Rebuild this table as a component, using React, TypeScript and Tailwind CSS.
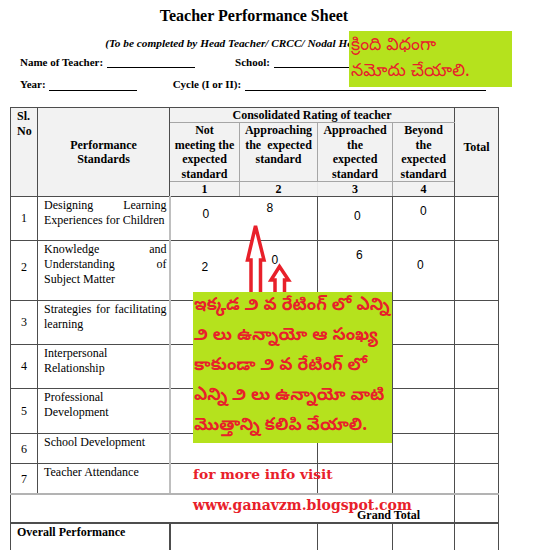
import React from "react";

const B = "border border-[#4d4d4d]";

export default function App() {
  const rows: {
    n: string;
    t: string;
    h: string;
    v: React.ReactNode[];
  }[] = [
    {
      n: "1",
      t: "Designing Learning Experiences for Children",
      h: "h-[44px]",
      v: [
        <span className="inline-block pl-[32px] pt-[10px]">0</span>,
        <span className="inline-block pl-[27px] pt-[4px]">8</span>,
        <span className="inline-block pl-[36px] pt-[12px]">0</span>,
        <span className="inline-block pl-[27px] pt-[7px]">0</span>,
      ],
    },
    {
      n: "2",
      t: "Knowledge and Understanding of Subject Matter",
      h: "h-[60px]",
      v: [
        <span className="inline-block pl-[31px] pt-[19px]">2</span>,
        <span className="inline-block pl-[32px] pt-[12px]">0</span>,
        <span className="inline-block pl-[38px] pt-[7px]">6</span>,
        <span className="inline-block pl-[24px] pt-[17px]">0</span>,
      ],
    },
    { n: "3", t: "Strategies for facilitating learning", h: "h-[44px]", v: [] },
    { n: "4", t: "Interpersonal Relationship", h: "h-[44px]", v: [] },
    { n: "5", t: "Professional Development", h: "h-[45px]", v: [] },
    { n: "6", t: "School Development", h: "h-[30px]", v: [] },
    { n: "7", t: "Teacher Attendance", h: "h-[30px]", v: [] },
  ];

  return (
    <div className="relative w-[533px] h-[550px] overflow-hidden bg-white text-black font-['Liberation_Serif','Times_New_Roman',serif]">
      <div className="ml-[10px] w-[488px]">
        <div className="mt-[7px] h-[18px] leading-[18px] text-center text-[16px] font-bold">
          Teacher Performance Sheet
        </div>
        <div className="mt-[12px] h-[12px] leading-[12px] text-center text-[11.3px] font-bold italic whitespace-nowrap">
          (To be completed by Head Teacher/ CRCC/ Nodal Head Master)
        </div>
        <div className="mt-[6px] h-[14px] flex items-end pl-[10px] text-[11px] font-bold leading-[14px]">
          <span>Name of Teacher:</span>
          <div className="ml-[4px] w-[88px] h-[1px] bg-black mb-[1px]" />
          <span className="ml-[40px]">School:</span>
          <div className="ml-[4px] w-[130px] h-[1px] bg-black mb-[1px]" />
        </div>
        <div className="mt-[8px] h-[14px] flex items-end pl-[10px] text-[11px] font-bold leading-[14px]">
          <span>Year:</span>
          <div className="ml-[3px] w-[88px] h-[1px] bg-black mb-[0px]" />
          <span className="ml-[36px]">Cycle (I or II):</span>
          <div className="ml-[4px] w-[241px] h-[1px] bg-black mb-[0px]" />
        </div>

        <table className="mt-[16px] w-[488px] table-fixed border-collapse text-[12px]">
          <colgroup>
            <col className="w-[27px]" />
            <col className="w-[132px]" />
            <col className="w-[70px]" />
            <col className="w-[78px]" />
            <col className="w-[75px]" />
            <col className="w-[62px]" />
            <col className="w-[44px]" />
          </colgroup>
          <thead className="font-bold leading-[14.5px]">
            <tr className="h-[15px] bg-[#f2f2f2]">
              <td rowSpan={3} className={`${B} align-top pl-[6px] pt-[1px] leading-[15px]`}>
                Sl.
                <br />
                No
              </td>
              <td rowSpan={3} className={`${B} text-center align-middle leading-[14px]`}>
                Performance
                <br />
                Standards
              </td>
              <td colSpan={4} className={`${B} border-b-[#a6a6a6] text-center leading-[13px]`}>
                Consolidated Rating of teacher
              </td>
              <td rowSpan={3} className={`${B} text-center align-middle pb-[10px]`}>
                Total
              </td>
            </tr>
            <tr className="h-[59px] bg-[#f2f2f2]">
              <td className="border border-[#a6a6a6] text-center align-top">
                Not
                <br />
                meeting the
                <br />
                expected
                <br />
                standard
              </td>
              <td className="border border-[#a6a6a6] text-center align-top">
                Approaching
                <br />
                the&nbsp; expected
                <br />
                standard
              </td>
              <td className="border border-[#a6a6a6] text-center align-top">
                Approached
                <br />
                the
                <br />
                expected
                <br />
                standard
              </td>
              <td className="border border-[#a6a6a6] text-center align-top">
                Beyond
                <br />
                the
                <br />
                expected
                <br />
                standard
              </td>
            </tr>
            <tr className="h-[15px] bg-[#f2f2f2]">
              <td className="border border-[#a6a6a6] border-b-[#4d4d4d] text-center leading-[13px]">1</td>
              <td className="border border-[#e6e6e6] border-b-[#4d4d4d] text-center leading-[13px]">2</td>
              <td className="border border-[#a6a6a6] border-b-[#4d4d4d] text-center leading-[13px]">3</td>
              <td className="border border-[#a6a6a6] border-b-[#4d4d4d] text-center leading-[13px]">4</td>
            </tr>
          </thead>
          <tbody className="leading-[15px]">
            {rows.map((r, i) => (
              <tr key={r.n} className={r.h}>
                <td
                  className={`${B} text-center align-middle ${
                    i === 1 ? "pb-[6px]" : i >= 5 ? "pt-[2px]" : ""
                  } ${i === 6 ? "border-b-2 border-b-[#b3b3b3]" : ""}`}
                >
                  {r.n}
                </td>
                <td
                  className={`${B} border-r-2 border-r-[#bfbfbf] align-top pl-[6px] pr-[2px] pt-[1px] text-justify ${
                    i === 6 ? "border-b-2 border-b-[#b3b3b3]" : ""
                  }`}
                >
                  {r.t}
                </td>
                <td
                  className={`border-y border-[#4d4d4d] align-top p-0 font-['Liberation_Sans',Arial,sans-serif] ${
                    i === 6 ? "border-b-2 border-b-[#b3b3b3]" : ""
                  }`}
                >
                  {r.v[0]}
                </td>
                <td
                  className={`border-y border-[#4d4d4d] align-top p-0 font-['Liberation_Sans',Arial,sans-serif] ${
                    i === 6 ? "border-b-2 border-b-[#b3b3b3]" : ""
                  }`}
                >
                  {r.v[1]}
                </td>
                <td
                  className={`${B} align-top p-0 font-['Liberation_Sans',Arial,sans-serif] ${
                    i === 6 ? "border-b-2 border-b-[#b3b3b3]" : ""
                  }`}
                >
                  {r.v[2]}
                </td>
                <td
                  className={`${B} align-top p-0 font-['Liberation_Sans',Arial,sans-serif] ${
                    i === 6 ? "border-b-2 border-b-[#b3b3b3]" : ""
                  }`}
                >
                  {r.v[3]}
                </td>
                <td className={`${B} ${i === 6 ? "border-b-2 border-b-[#b3b3b3]" : ""}`} />
              </tr>
            ))}
            <tr className="h-[29px]">
              <td
                colSpan={6}
                className={`${B} border-b-2 border-b-[#4d4d4d] align-bottom text-right pr-[34px] pb-[0px] font-bold leading-[14px]`}
              >
                Grand Total
              </td>
              <td className={`${B} border-b-2 border-b-[#4d4d4d]`} />
            </tr>
            <tr className="h-[30px]">
              <td colSpan={2} className={`${B} align-top pl-[6px] pt-[1px] font-bold`}>
                Overall Performance
              </td>
              <td colSpan={2} className={`${B} border-l-2 border-l-[#4d4d4d]`} />
              <td className={B} />
              <td className={B} />
              <td className={B} />
            </tr>
          </tbody>
        </table>
      </div>

      {/* Annotation: top green note */}
      <div className="absolute left-[349px] top-[31px] w-[163px] h-[56px] bg-[#b5e21d] pl-[2px] pt-[3px] text-[17.5px] leading-[26px] text-[#e8202a] whitespace-nowrap font-['Noto_Sans_Telugu','Noto_Sans',sans-serif]">
        <div>క్రింది విధంగా</div>
        <div>నమోదు చేయాలి.</div>
      </div>

      {/* Arrows */}
      <svg
        className="absolute left-0 top-0 pointer-events-none"
        width="533"
        height="550"
        viewBox="0 0 533 550"
      >
        <polygon
          points="255.5,226 247.5,260 251,260 251,295 260.5,295 260.5,260 264,260"
          fill="#ffffff"
          stroke="#e8202a"
          strokeWidth="3.5"
          strokeLinejoin="miter"
        />
        <polygon
          points="279.5,266.5 271,280 275,280 275,296 284.5,296 284.5,280 288.5,280"
          fill="#ffffff"
          stroke="#e8202a"
          strokeWidth="3.5"
          strokeLinejoin="miter"
        />
      </svg>

      {/* Annotation: big green note */}
      <div className="absolute left-[193px] top-[292px] w-[199px] h-[151px] overflow-hidden bg-[#b5e21d] pl-[1px] pt-[0px] text-[17.2px] leading-[30px] font-bold text-[#e8202a] whitespace-nowrap font-['Noto_Sans_Telugu','Noto_Sans',sans-serif]">
        <div>ఇక్కడ ౨ వ రేటింగ్ లో ఎన్ని</div>
        <div>౨ లు ఉన్నాయో ఆ సంఖ్య</div>
        <div>కాకుండా ౨ వ రేటింగ్ లో</div>
        <div>ఎన్ని ౨ లు ఉన్నాయో వాటి</div>
        <div>మొత్తాన్ని కలిపి వేయాలి.</div>
      </div>

      {/* Annotation: link text */}
      <div className="absolute left-[193px] top-[464px] text-[13.8px] leading-[20px] font-bold text-[#e8202a] font-['DejaVu_Serif',serif]">
        for more info visit
      </div>
      <div className="absolute left-[193px] top-[495px] text-[14px] leading-[20px] font-bold text-[#e8202a] font-['DejaVu_Serif',serif]">
        www.ganavzm.blogspot.com
      </div>
    </div>
  );
}
